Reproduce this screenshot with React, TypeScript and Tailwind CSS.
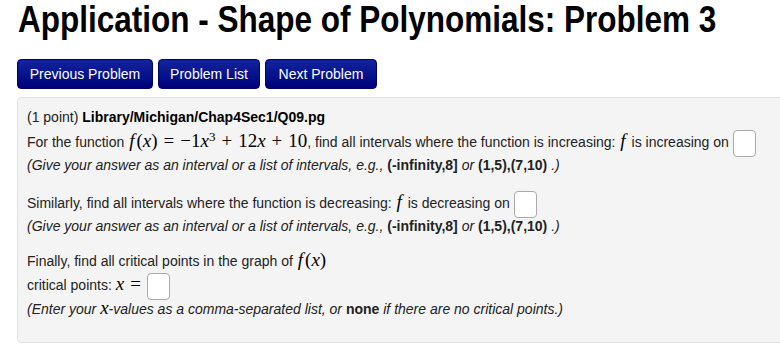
import React from 'react';

const sans = { fontFamily: '"Liberation Sans", Arial, sans-serif' };
const serif = { fontFamily: '"Liberation Serif", "Times New Roman", serif' };

function Blank() {
  return (
    <span className="inline-block align-middle -my-[6px] w-[23px] h-[27px] rounded-[4px] border border-[#aaa] bg-white" />
  );
}

function M({ children }: { children: React.ReactNode }) {
  return (
    <span className="text-[19px] text-black" style={serif}>
      {children}
    </span>
  );
}

function V({ children }: { children: React.ReactNode }) {
  return <i className="italic">{children}</i>;
}

// italic f with a little room, as MathJax sets it
function F() {
  return <i className="italic ml-[1px] mr-[2px]">f</i>;
}

function Op({ children }: { children: React.ReactNode }) {
  return <span className="mx-[6px]">{children}</span>;
}

function Hint() {
  return (
    <div className="h-[24px] leading-[24px] italic whitespace-nowrap">
      (Give your answer as an interval or a list of intervals, e.g., <b className="not-italic">(-infinity,8]</b> or{' '}
      <b className="not-italic">(1,5),(7,10)</b> .)
    </div>
  );
}

export default function App() {
  return (
    <div className="w-[780px] h-[362px] bg-white overflow-hidden text-[#222]" style={sans}>
      <h1 className="pl-[18px] pt-[0px] h-[40px] text-[36px] leading-[40px] font-bold text-black whitespace-nowrap">
        <span className="inline-block origin-left scale-x-[0.875]">Application - Shape of Polynomials: Problem 3</span>
      </h1>

      <div className="flex gap-[5px] pl-[17px] mt-[19px]">
        {[
          ['Previous Problem', 'w-[136px]'],
          ['Problem List', 'w-[102px]'],
          ['Next Problem', 'w-[112px]'],
        ].map(([b, w]) => (
          <button
            key={b}
            className={`${w} h-[30px] rounded-[4px] text-white text-[14px] bg-gradient-to-b from-[#13239e] to-[#00007a] border border-[#000066]`}
          >
            {b}
          </button>
        ))}
      </div>

      <div className="ml-[17px] mt-[8px] w-[780px] h-[246px] bg-[#f4f4f4] border border-[#e3e3e3] rounded-[4px] pl-[9px] pt-[8px] text-[14px]">
        <div className="h-[23px] leading-[23px]">
          (1 point) <b className="text-black">Library/Michigan/Chap4Sec1/Q09.pg</b>
        </div>
        <div className="h-[24px] leading-[24px] whitespace-nowrap">
          For the function{' '}
          <M>
            <F />(<V>x</V>)<Op>=</Op>−1<V>x</V>
            <sup className="text-[13px]">3</sup>
            <Op>+</Op>12<V>x</V>
            <Op>+</Op>10
          </M>
          , find all intervals where the function is increasing:{' '}
          <M>
            <F />
          </M>{' '}
          is increasing on <Blank />
        </div>
        <Hint />
        <div className="h-[24px] leading-[24px] mt-[13px] whitespace-nowrap">
          Similarly, find all intervals where the function is decreasing:{' '}
          <M>
            <F />
          </M>{' '}
          is decreasing on <Blank />
        </div>
        <Hint />
        <div className="h-[24px] leading-[24px] mt-[10px]">
          Finally, find all critical points in the graph of{' '}
          <M>
            <F />(<V>x</V>)
          </M>
        </div>
        <div className="h-[24px] leading-[24px]">
          critical points:{' '}
          <M>
            <V>x</V>
            <Op>=</Op>
          </M>
          <Blank />
        </div>
        <div className="h-[24px] leading-[24px] italic whitespace-nowrap">
          (Enter your{' '}
          <M>
            <V>x</V>
          </M>
          -values as a comma-separated list, or <b className="not-italic">none</b> if there are no critical points.)
        </div>
      </div>
    </div>
  );
}
